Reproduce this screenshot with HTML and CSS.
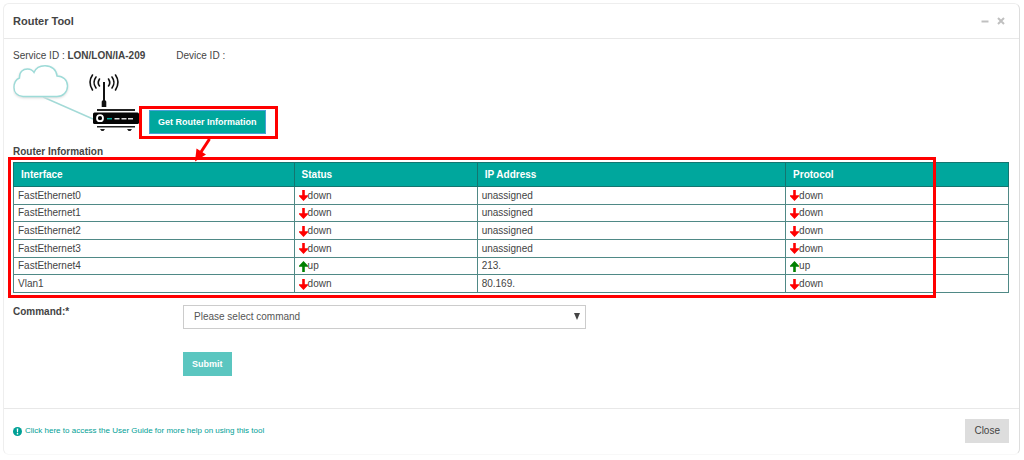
FILE: index.html
```html
<!DOCTYPE html>
<html lang="en">
<head>
<meta charset="utf-8">
<title>Router Tool</title>
<link rel="stylesheet" href="styles.css">
</head>
<body>
<svg class="sprite" aria-hidden="true">
  <symbol id="arrow-down" viewBox="0 0 9 11"><path d="M3.200 0h2.600v5.200H9v1L4.500 11 0 6.200v-1h3.200z"/></symbol>
  <symbol id="arrow-up" viewBox="0 0 9 11"><path d="M3.200 11h2.600V5.800H9v-1L4.500 0 0 4.800v1h3.200z"/></symbol>
</svg>
<main class="dialog">
  <header class="dialog-header">
    <h1 class="title">Router Tool</h1>
    <div class="window-actions">
      <button class="icon-button" type="button" aria-label="Minimise"><svg width="8" height="8" viewBox="0 0 8 8"><path d="M0.5 4.5h7"/></svg></button>
      <button class="icon-button" type="button" aria-label="Close window"><svg width="8" height="8" viewBox="0 0 8 8"><path d="M1 1l6 6M7 1L1 7"/></svg></button>
    </div>
  </header>

  <div class="dialog-body">
    <div class="ids">
      <span>Service ID : <b>LON/LON/IA-209</b></span>
      <span>Device ID :</span>
    </div>

    <div class="network">
      <svg class="diagram" width="126" height="68" viewBox="0 0 126 68" role="img" aria-label="Cloud connected to a router">
        <path d="M30 32L80 54" fill="none" stroke="#a3dad7" stroke-width="1.4"/>
        <path class="cloud" d="M10 31.500C4 31 1 27 1 22.500C1 17.500 3 14.500 6.500 13C6 7 10 4 14.500 4C17.500 4 19.500 5 21 7.500C23 2.500 27 .8 32 .8C39 .8 43.500 5 44 11C50 11 54.500 15 54.500 21C54.500 27 50 31.500 44 31.500Z"/>
        <g fill="none" stroke="#111" stroke-width="1.600" stroke-linecap="round">
          <path d="M86.500 14q-2.500 4 0 7M83 12q-4 5.500 0 11M79.500 10q-5 7 0 15"/>
          <path d="M95.500 14q2.500 4 0 7M99 12q4 5.500 0 11M102.500 10q5 7 0 15"/>
        </g>
        <path d="M90 17h2v18l1.300 1.500V42h-4.600v-5.500L90 35z" fill="#111"/>
        <path d="M84 44h38v2H84zM84 61h38v1.500H84zM87 64h5l-1.500 2h-2zM114 64h5l-1.500 2h-2z" fill="#222"/>
        <rect x="80" y="47.500" width="46" height="11.500" rx="1.500" fill="#050505"/>
        <circle cx="87" cy="53.200" r="3" fill="#000" stroke="#fff" stroke-width="1.800"/>
        <path d="M94 53.700h5" stroke="#00a79d" stroke-width="1.500"/>
        <path d="M101.500 53.700h5M108.500 53.700h5M115 53.700h5" stroke="#ddd" stroke-width="1.500"/>
      </svg>
      <div class="callout">
        <button class="button button-primary" type="button">Get Router Information</button>
        <svg class="callout-arrow" width="18" height="24" viewBox="0 0 18 24" aria-hidden="true"><path d="M15.500 1L7 14" stroke="#f00" stroke-width="3"/><path d="M1 23.500L2.500 10.500 12 16.500z" fill="#f00"/></svg>
      </div>
    </div>

    <h2 class="section-title">Router Information</h2>
    <div class="table-area">
      <table class="interfaces">
        <colgroup><col class="col-interface"><col class="col-status"><col class="col-address"><col></colgroup>
        <thead><tr><th>Interface</th><th>Status</th><th>IP Address</th><th>Protocol</th></tr></thead>
        <tbody>
          <tr><td>FastEthernet0</td><td><span class="state down"><svg><use href="#arrow-down"/></svg>down</span></td><td>unassigned</td><td><span class="state down"><svg><use href="#arrow-down"/></svg>down</span></td></tr>
          <tr><td>FastEthernet1</td><td><span class="state down"><svg><use href="#arrow-down"/></svg>down</span></td><td>unassigned</td><td><span class="state down"><svg><use href="#arrow-down"/></svg>down</span></td></tr>
          <tr><td>FastEthernet2</td><td><span class="state down"><svg><use href="#arrow-down"/></svg>down</span></td><td>unassigned</td><td><span class="state down"><svg><use href="#arrow-down"/></svg>down</span></td></tr>
          <tr><td>FastEthernet3</td><td><span class="state down"><svg><use href="#arrow-down"/></svg>down</span></td><td>unassigned</td><td><span class="state down"><svg><use href="#arrow-down"/></svg>down</span></td></tr>
          <tr><td>FastEthernet4</td><td><span class="state up"><svg><use href="#arrow-up"/></svg>up</span></td><td>213.</td><td><span class="state up"><svg><use href="#arrow-up"/></svg>up</span></td></tr>
          <tr><td>Vlan1</td><td><span class="state down"><svg><use href="#arrow-down"/></svg>down</span></td><td>80.169.</td><td><span class="state down"><svg><use href="#arrow-down"/></svg>down</span></td></tr>
        </tbody>
      </table>
    </div>

    <form class="command-form">
      <label class="command-label" for="command">Command:*</label>
      <div class="select-wrap">
        <select class="command-select" id="command"><option>Please select command</option></select>
        <svg class="select-caret" width="6" height="7" viewBox="0 0 6 7" aria-hidden="true"><path d="M0 0h6L3 7z" fill="#444"/></svg>
      </div>
      <button class="button button-submit" type="button">Submit</button>
    </form>
  </div>

  <footer class="dialog-footer">
    <a class="help-link" href="#guide"><svg width="9" height="9" viewBox="0 0 9 9" aria-hidden="true"><circle cx="4.500" cy="4.500" r="4.500" fill="#00a096"/><path d="M3.700 1.500h1.600L5 5.300H4zM3.800 6h1.400v1.400H3.800z" fill="#fff"/></svg>Click here to access the User Guide for more help on using this tool</a>
    <button class="button button-close" type="button">Close</button>
  </footer>
</main>
</body>
</html>
```
FILE: styles.css
```css
*, ::after { box-sizing: border-box; }
body {
  margin: 0;
  padding: 3px 4px 4px 3px;
  background: #fff;
  color: #444;
  font: 10px/14px "Liberation Sans", Arial, sans-serif;
}
.sprite { position: absolute; width: 0; height: 0; }
button, select { font: inherit; }
.dialog {
  border: 1px solid #eee;
  border-right-color: #ddd;
  border-bottom-color: #f8f8f8;
  border-radius: 6px;
}
.dialog-header {
  display: flex;
  align-items: center;
  justify-content: space-between;
  height: 35px;
  padding: 0 14px 0 9px;
  border-bottom: 1px solid #e8e8e8;
}
.title { margin: 0; font-size: 11px; line-height: 14px; color: #444; }
.window-actions { display: flex; gap: 8px; }
.icon-button { display: flex; padding: 0; border: 0; background: none; }
.icon-button path { fill: none; stroke: #c0c0c0; stroke-width: 2; }

.dialog-body { padding: 10px 10px 32px 9px; }
.ids { display: flex; gap: 31px; }
.network { display: flex; align-items: flex-end; padding-top: 2px; }
.diagram { display: block; }
.cloud { fill: #fff; stroke: #9ddbd8; stroke-width: 1.4; filter: drop-shadow(0 1px 1px #ddd); }
.callout {
  position: relative;
  display: flex;
  margin: 0 0 -6px;
  padding: 1px 9px 2px 7px;
  border: 3px solid #f00;
}
.callout-arrow { position: absolute; left: 52px; top: 29px; z-index: 2; }
.button {
  padding: 4px 8px;
  border: 1px solid transparent;
  color: #fff;
  font-size: 9px;
  font-weight: bold;
  line-height: 14px;
}
.button-primary { background: #00a79d; border-color: #48a0d8; }

.section-title { margin: 12px 0 3px; font-size: 10px; line-height: 14px; }
.table-area { position: relative; }
.table-area::after {
  content: "";
  position: absolute;
  left: -5px;
  top: -5px;
  bottom: -5px;
  width: 93.2%;
  border: 3px solid #f00;
  pointer-events: none;
}
.interfaces { width: 100%; height: 131px; table-layout: fixed; border-collapse: collapse; }
.col-interface { width: 28.2%; }
.col-status { width: 18.4%; }
.col-address { width: 31%; }
.interfaces th {
  height: 24px;
  padding: 0 7px;
  border: 1px solid #14756f;
  background: #00a79d;
  color: #fff;
  text-align: left;
}
.interfaces td { padding: 1px 4px 0; border: 1px solid #4f8986; line-height: 14px; }
.state { display: flex; align-items: center; }
.state svg { width: 9px; height: 11px; }
.down svg { fill: #f00; }
.up svg { fill: #008000; }

.command-form {
  display: grid;
  grid-template-columns: 170px minmax(0, 403px);
  row-gap: 23px;
  padding-top: 12px;
}
.command-label { font-weight: bold; line-height: 14px; }
.select-wrap { position: relative; }
.command-select {
  display: block;
  width: 100%;
  height: 24px;
  padding: 0 10px;
  border: 1px solid #ccc;
  border-radius: 0;
  appearance: none;
  background: #fff;
  color: #555;
}
.select-caret { position: absolute; right: 6px; top: 8px; pointer-events: none; }
.button-submit { grid-column: 2; justify-self: start; background: #5bc6c0; }

.dialog-footer {
  display: flex;
  align-items: center;
  justify-content: space-between;
  padding: 10px 10px 11px 9px;
  border-top: 1px solid #e8e8e8;
}
.help-link { display: flex; align-items: center; gap: 3px; color: #00a096; font-size: 8px; text-decoration: none; }
.button-close { background: #ddd; color: #444; font-size: 10px; font-weight: normal; }
```
